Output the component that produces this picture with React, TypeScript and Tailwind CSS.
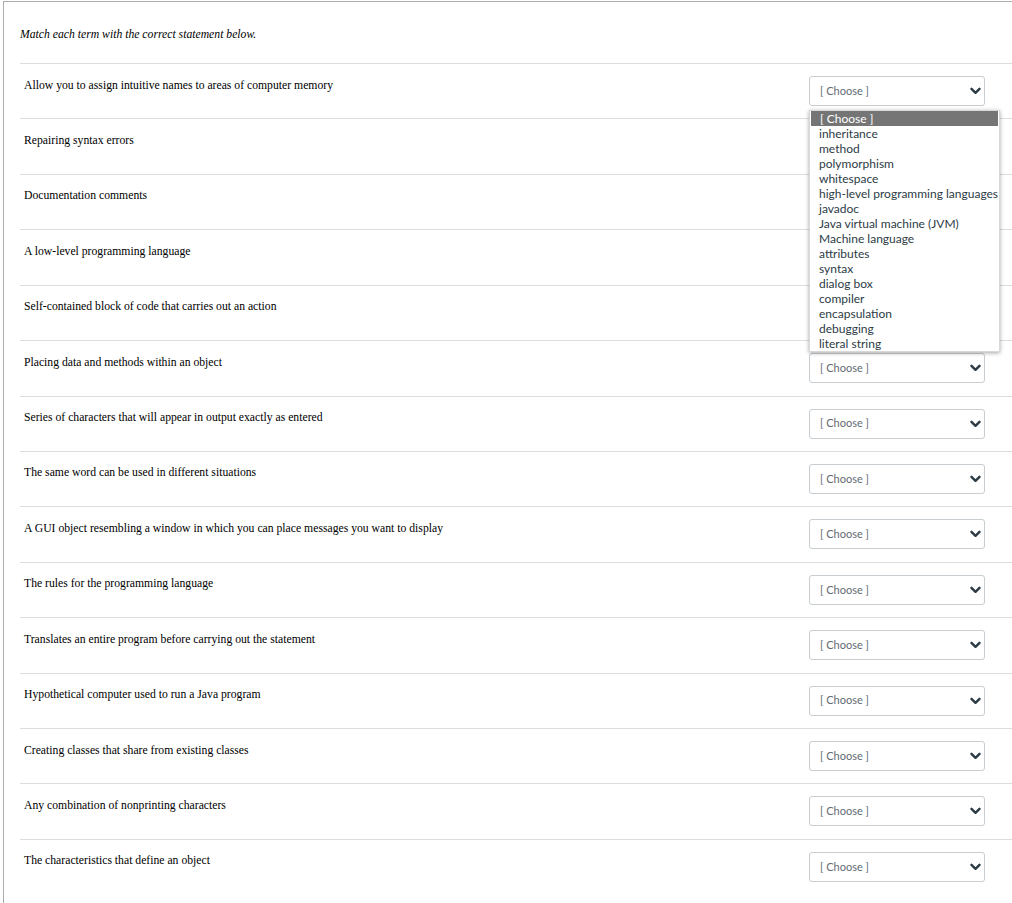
import { type ReactElement } from 'react';

const STATEMENTS = [
  'Allow you to assign intuitive names to areas of computer memory',
  'Repairing syntax errors',
  'Documentation comments',
  'A low-level programming language',
  'Self-contained block of code that carries out an action',
  'Placing data and methods within an object',
  'Series of characters that will appear in output exactly as entered',
  'The same word can be used in different situations',
  'A GUI object resembling a window in which you can place messages you want to display',
  'The rules for the programming language',
  'Translates an entire program before carrying out the statement',
  'Hypothetical computer used to run a Java program',
  'Creating classes that share from existing classes',
  'Any combination of nonprinting characters',
  'The characteristics that define an object',
];

const OPTIONS = [
  '[ Choose ]',
  'inheritance',
  'method',
  'polymorphism',
  'whitespace',
  'high-level programming languages',
  'javadoc',
  'Java virtual machine (JVM)',
  'Machine language',
  'attributes',
  'syntax',
  'dialog box',
  'compiler',
  'encapsulation',
  'debugging',
  'literal string',
];

function Chevron(): ReactElement {
  return (
    <svg width="11" height="8" viewBox="0 0 11 8" className="text-[#2d3b45]">
      <path d="M1.5 1.8 L5.5 5.8 L9.5 1.8" fill="none" stroke="currentColor" strokeWidth="2.4" strokeLinecap="round" strokeLinejoin="round" />
    </svg>
  );
}

// Option list drawn open under the first select
function OpenList(): ReactElement {
  return (
    <div className="absolute left-0 top-[34px] z-10 w-[191px] bg-white border border-[#d8d8d8] shadow-[0_1px_4px_rgba(0,0,0,0.35)]">
      {OPTIONS.map((opt, i) => (
        <div
          key={opt}
          className={`h-[15px] pl-[9px] text-[12px] leading-[15px] whitespace-nowrap ${
            i === 0 ? 'mx-px bg-[#757575] text-white' : 'text-[#2d3b45]'
          }`}
        >
          {opt}
        </div>
      ))}
    </div>
  );
}

function ChooseSelect({ open = false }: { open?: boolean }): ReactElement {
  return (
    <div className="relative w-[176px] mt-[12px] mr-[27px] font-['Lato',sans-serif]">
      <div className="flex items-center justify-between h-[30px] pl-[10px] pr-[3px] bg-white border border-[#c7cdd1] rounded-[3px]">
        <span className="text-[11px] text-[#5f6b73]">[ Choose ]</span>
        <Chevron />
      </div>
      {open && <OpenList />}
    </div>
  );
}

export default function App(): ReactElement {
  return (
    <div className="min-h-[902px] mt-px ml-[3px] border-l border-t border-[#adadad] bg-white pl-[16px] font-['Liberation_Serif',serif] text-black">
      {/* Instructions */}
      <div className="h-[61px] pt-[24.5px] text-[11.7px] leading-[16px] italic">
        Match each term with the correct statement below.
      </div>

      {/* Question rows */}
      {STATEMENTS.map((text, i) => (
        <div key={text} className="flex items-start justify-between h-[55.43px] border-t border-[#ddd]">
          <div className="pl-[4px] pt-[13.5px] text-[11.7px] leading-[16px]">{text}</div>
          <ChooseSelect open={i === 0} />
        </div>
      ))}
    </div>
  );
}
